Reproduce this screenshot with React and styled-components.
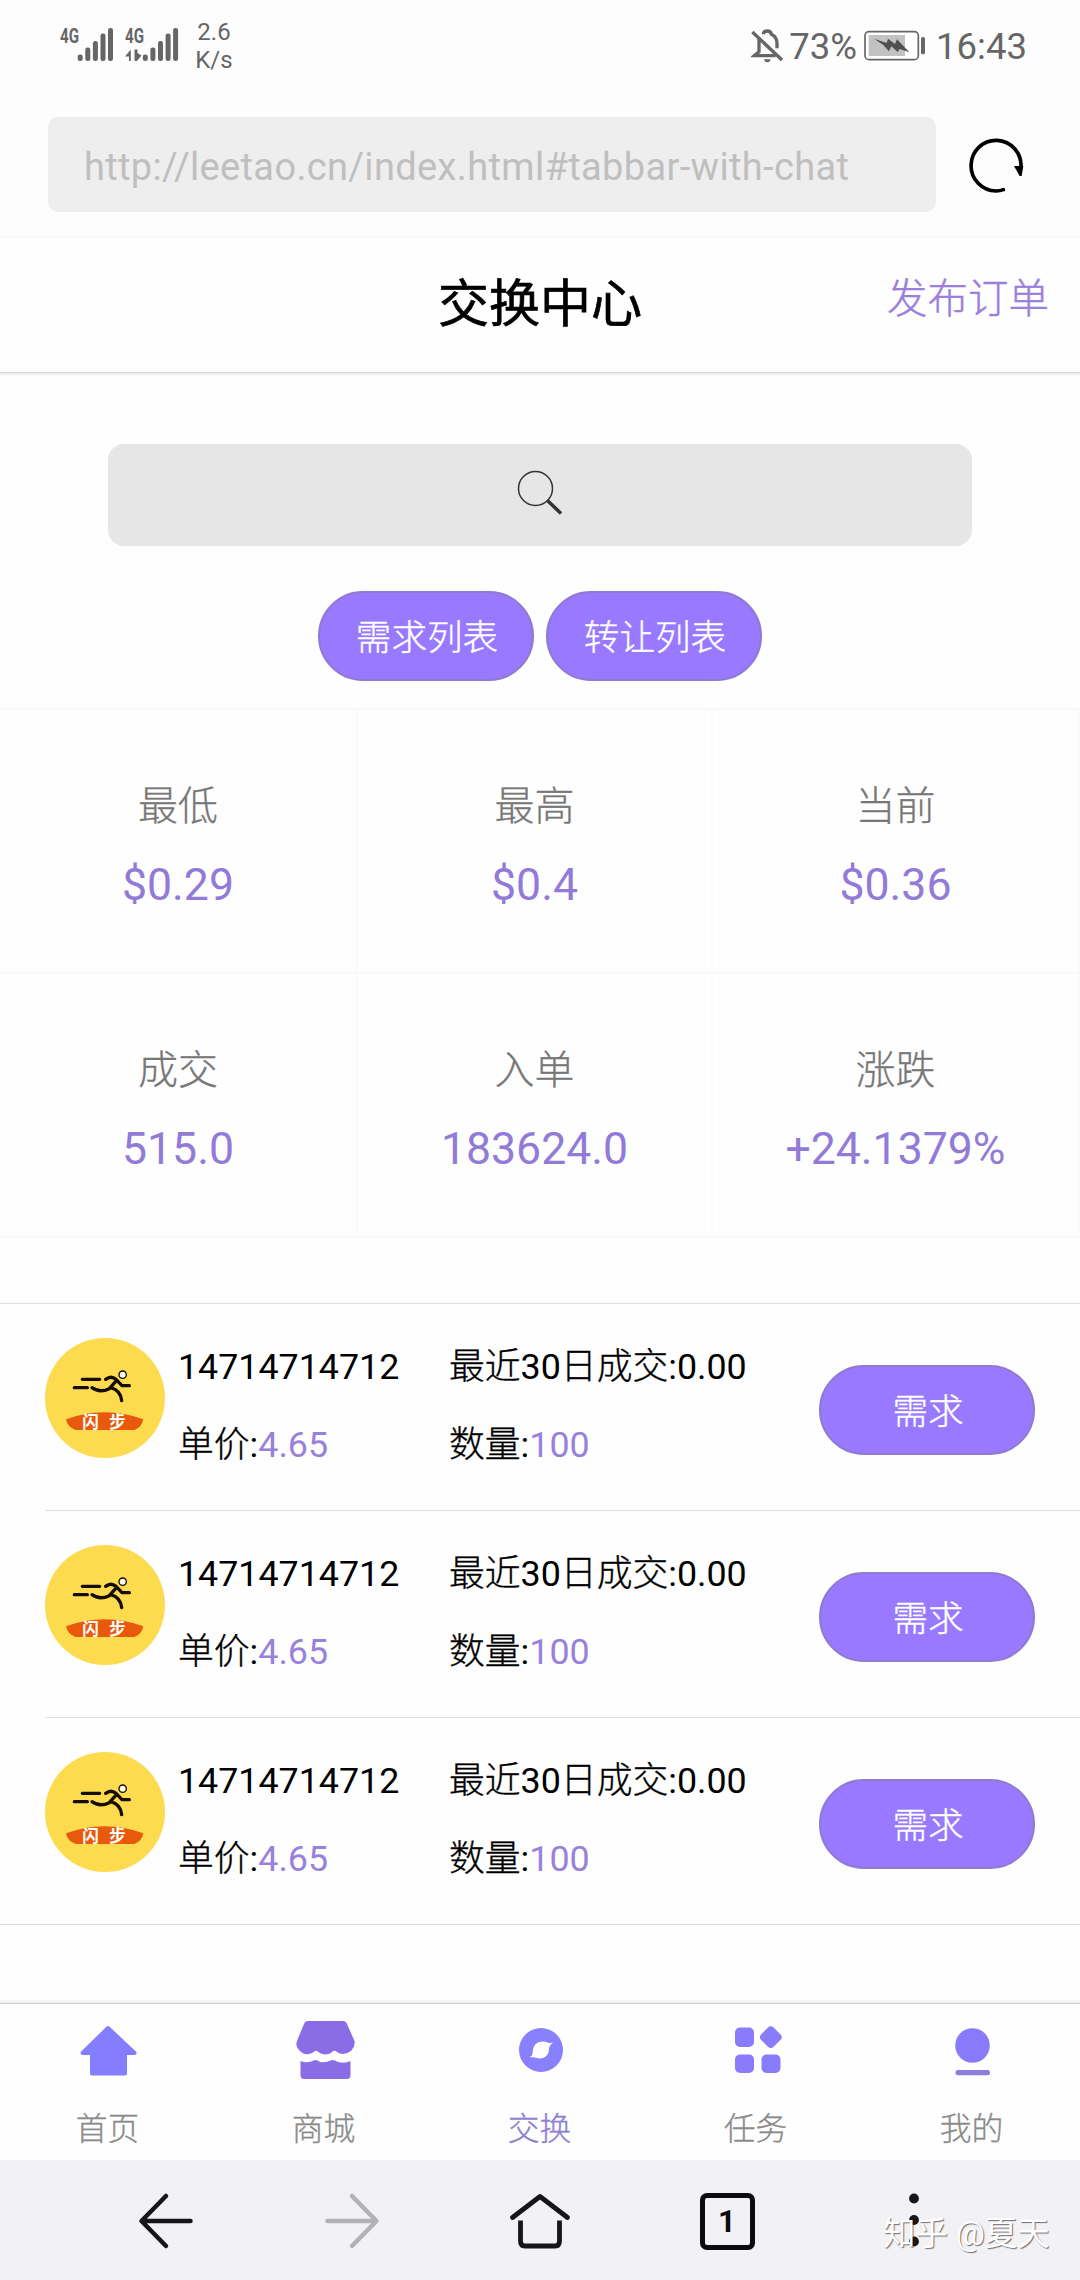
import React from "react";
import styled, { createGlobalStyle } from "styled-components";

const Global = createGlobalStyle`
  * { box-sizing: border-box; }
  body { margin: 0; background: #fefefe; }
`;

const Screen = styled.div`
  width: 1080px;
  height: 2280px;
  display: flex;
  flex-direction: column;
  overflow: hidden;
  background: #fefefe;
  font-family: Roboto, "Noto Sans CJK SC", sans-serif;
  font-weight: 400;
`;

const StatusBar = styled.div`
  height: 92px;
  flex: none;
  display: flex;
  justify-content: space-between;
  padding: 0 53px 0 56px;
  background: #fdfdfd;
  color: #666;
`;

const StatusGroup = styled.div`
  display: flex;
  align-items: flex-start;
`;

const NetSpeed = styled.div`
  width: 46px;
  margin: 18px 0 0 11px;
  font-size: 24px;
  line-height: 28px;
  text-align: center;
`;

const StatusText = styled.span`
  font-size: 36.5px;
  line-height: 44px;
  margin-top: 25px;
  margin-left: ${(p) => p.$left}px;
`;

const Icon = styled.svg`
  display: block;
  flex: none;
  width: ${(p) => p.$w}px;
  height: ${(p) => p.$h}px;
  margin-top: ${(p) => p.$top || 0}px;
  margin-left: ${(p) => p.$left || 0}px;
`;

const AddressRow = styled.div`
  height: 146px;
  flex: none;
  display: flex;
  align-items: flex-start;
  padding: 25px 0 0 48px;
  background: #fdfdfd;
`;

const AddressBox = styled.div`
  width: 888px;
  height: 95px;
  padding: 3px 0 0 36px;
  border-radius: 10px;
  background: #eee;
  color: #bfbfbf;
  font-size: 38px;
  letter-spacing: 0.35px;
  line-height: 95px;
  white-space: nowrap;
`;

const PageHeader = styled.header`
  height: 135px;
  flex: none;
  display: grid;
  grid-template-columns: 1fr auto 1fr;
  align-items: center;
  padding-right: 31px;
  border-bottom: 1px solid #d9d9d9;
  box-shadow: 0 1px 3px rgba(0, 0, 0, 0.12);
`;

const Title = styled.h1`
  grid-column: 2;
  margin: 0 0 0 31px;
  font-size: 51px;
  font-weight: 400;
  -webkit-text-stroke: 0.7px #000;
  line-height: 60px;
  color: #000;
`;

const HeaderAction = styled.span`
  justify-self: end;
  padding-bottom: 13px;
  font-size: 40.5px;
  font-weight: 300;
  -webkit-text-stroke: 0.4px #9a80dc;
  line-height: 50px;
  color: #9a80dc;
`;

const SearchBox = styled.div`
  width: 864px;
  height: 102px;
  flex: none;
  margin: 71px auto 0;
  display: flex;
  justify-content: center;
  border-radius: 16px;
  background: #e6e6e6;
`;

const FilterRow = styled.div`
  display: flex;
  flex: none;
  justify-content: center;
  gap: 12px;
  margin-top: 45px;
`;

const Pill = styled.button`
  width: 216px;
  height: 90px;
  flex: none;
  margin: 0;
  padding: 3px 0 0 2px;
  border: 2px solid #8f79d2;
  border-radius: 45px;
  background: #9879ff;
  color: #fff;
  font-family: inherit;
  font-size: 35.6px;
  font-weight: 300;
  -webkit-text-stroke: 0.4px #fff;
  line-height: 44px;
`;

const Stats = styled.div`
  display: grid;
  flex: none;
  grid-template-columns: 358px 355px 367px;
  grid-auto-rows: 264px;
  margin-top: 27px;
  border-top: 2px solid #fafafa;
`;

const Stat = styled.div`
  display: flex;
  flex-direction: column;
  align-items: center;
  gap: 30px;
  padding-top: 72.5px;
  border-right: 2px solid #fbfafc;
  border-bottom: 2px solid #fafafa;
`;

const StatLabel = styled.span`
  font-size: 40px;
  font-weight: 300;
  -webkit-text-stroke: 0.3px #777;
  line-height: 48px;
  color: #777;
`;

const StatValue = styled.span`
  font-size: 44.6px;
  line-height: 48px;
  color: #927bd8;
`;

const OrderList = styled.div`
  flex: none;
  margin-top: 65px;
  border-top: 1px solid #dedede;
  border-bottom: 1px solid #dadada;
`;

const Order = styled.div`
  height: 207px;
  display: flex;
  margin-left: 45px;
  border-bottom: 1px solid #dfdfdf;
  &:last-child {
    height: 206px;
    border-bottom: none;
  }
`;

const OrderColumn = styled.div`
  width: ${(p) => p.$w}px;
  margin-left: ${(p) => p.$left || 0}px;
  padding-top: 24px;
  font-size: 35.8px;
  line-height: 78px;
  color: #000;
  white-space: nowrap;
`;

const OrderLine = styled.div`
  height: 78px;
`;

const Han = styled.span`
  font-family: "Noto Sans CJK SC", sans-serif;
  font-weight: 300;
  -webkit-text-stroke: 0.35px #000;
  line-height: 0;
`;

const Amount = styled.span`
  color: #9781dc;
`;

const OrderAction = styled.div`
  padding-top: 61px;
`;

const BadgeText = styled.text`
  font-family: "Noto Sans CJK SC", sans-serif;
  font-size: 50px;
  font-weight: 700;
  fill: #fff;
`;

const SignalText = styled.text`
  font-family: Roboto, sans-serif;
  font-size: 20px;
  font-weight: 700;
  fill: #666;
`;

const TabBar = styled.nav`
  height: 157px;
  flex: none;
  margin-top: auto;
  display: grid;
  grid-template-columns: repeat(5, 1fr);
  border-top: 1px solid #cfcfcf;
  box-shadow: 0 -1px 3px rgba(0, 0, 0, 0.12);
`;

const Tab = styled.div`
  display: flex;
  flex-direction: column;
  align-items: center;
  padding-top: 12px;
  gap: 27px;
  font-size: 31.8px;
  font-weight: 300;
  -webkit-text-stroke: 0.3px currentColor;
  line-height: 40px;
  color: ${(p) => (p.$active ? "#8e80d0" : "#8a8a8a")};
`;

const TabLabel = styled.span`
  padding-right: 1px;
`;

const BrowserBar = styled.div`
  position: relative;
  height: 120px;
  flex: none;
  display: grid;
  grid-template-columns: repeat(5, 187px);
  justify-items: center;
  padding: 28px 73px 0 72px;
  background: #f2f1f5;
`;

const WindowCount = styled.div`
  width: 55px;
  height: 57px;
  margin: 5px 0 0 1px;
  display: flex;
  align-items: center;
  justify-content: center;
  border: 5px solid #0c0c0e;
  border-radius: 7px;
  font-size: 31px;
  font-weight: 700;
  color: #0c0c0e;
`;

const Watermark = styled.span`
  position: absolute;
  left: 883px;
  top: 54px;
  font-size: 32.4px;
  font-weight: 400;
  line-height: 40px;
  white-space: nowrap;
  color: #fff;
  text-shadow: 1px 1px 1px rgba(0, 0, 0, 0.55);
`;

const BARS = [
  [0, 54.6],
  [7.6, 47.5],
  [15.2, 41],
  [22.8, 33.6],
  [30.3, 28],
];

function Bars({ x }) {
  return BARS.map(([dx, top]) => (
    <rect key={dx} x={x + dx - 2.5} y={top} width="5" height={61 - top} rx="2.2" fill="#666" />
  ));
}

function Signals() {
  return (
    <Icon $w={124} $h={60} $top={15} viewBox="56 15 124 60">
      <SignalText x="60" y="42.6" textLength="19" lengthAdjust="spacingAndGlyphs">4G</SignalText>
      <Bars x={80.2} />
      <SignalText x="125" y="42.6" textLength="19" lengthAdjust="spacingAndGlyphs">4G</SignalText>
      <Bars x={145.3} />
      <path d="M130.8 61V49.500L125 56.500H129V61ZM134.500 49.500H137.500V53L141.500 55.500L137 61H134.500Z" fill="#666" />
    </Icon>
  );
}

function BellOff() {
  return (
    <Icon $w={34} $h={38} $top={27} viewBox="34 50 102 114">
      <g fill="none" stroke="#666" strokeWidth="10">
        <path d="M38 65L127 149" />
        <path d="M58 84V124L44 136H108" />
        <path d="M71 72Q71 62 83 62Q94 62 95 72Q112 80 112 100V114" />
      </g>
      <path d="M72 147H94Q90 156 83 156Q76 156 72 147Z" fill="#666" />
    </Icon>
  );
}

function Battery() {
  return (
    <Icon $w={62} $h={32} $top={30} $left={7} viewBox="375 60 186 96">
      <rect x="378" y="65" width="160" height="84" rx="12" fill="#fff" stroke="#666" strokeWidth="5" />
      <rect x="389" y="75" width="109" height="63" fill="#c2c2c2" />
      <path d="M405 86L443 99L447 86L468 102L474 88L511 127L482 117L476 126L457 109L450 124L432 104Z" fill="#505050" />
      <rect x="546" y="81" width="12" height="52" rx="5" fill="#666" />
    </Icon>
  );
}

function Reload() {
  return (
    <Icon $w={58} $h={58} $top={20} $left={31} viewBox="681 381 174 174">
      <path d="M843 472A75 76 0 1 0 768 543Q780 543 790 539" fill="none" stroke="#000" strokeWidth="11" strokeLinecap="round" />
      <path d="M822 468H850L845 498H839Z" fill="#000" />
    </Icon>
  );
}

function Magnifier() {
  return (
    <Icon $w={48} $h={48} $top={25} viewBox="516 469 48 48">
      <circle cx="535.5" cy="488.5" r="17" fill="none" stroke="#333" strokeWidth="1.5" />
      <path d="M547.5 500.5L561 513.5" stroke="#333" strokeWidth="3.5" />
    </Icon>
  );
}

function Avatar() {
  return (
    <Icon $w={120} $h={120} $top={34} viewBox="45 53 360 360">
      <circle cx="225" cy="233" r="180" fill="#fddb4f" />
      <g fill="none" stroke="#150c00" strokeWidth="10" strokeLinecap="round" strokeLinejoin="round">
        <path d="M157 177H209M133 202H172" />
        <path d="M227 177Q243 164 258 177L276 196H298" />
        <path d="M260 180L238 205Q209 219 186 202M242 202Q272 210 275 241" />
      </g>
      <circle cx="278" cy="163" r="11" fill="#fffdf0" stroke="#150c00" strokeWidth="4" />
      <path d="M108 297Q224 255 340 297Q335 322 313 329H137Q113 322 108 297Z" fill="#e8590c" />
      <BadgeText x="157" y="322">闪</BadgeText>
      <BadgeText x="237" y="322">步</BadgeText>
    </Icon>
  );
}

const TAB_ICONS = {
  home: (
    <path
      d="M108 2028L134.5 2053H125V2073.5H92V2053H82.5Z"
      fill="#857dff" stroke="#857dff" strokeWidth="4" strokeLinejoin="round"
    />
  ),
  shop: (
    <g fill="#8a6ce6">
      <path d="M308 2021H343Q346 2021 347 2024L354.5 2041Q355.500 2046 351 2051Q343 2056.500 337 2052Q334 2049 331 2053Q325 2056 319 2052.500Q316 2049 313 2052.500Q305 2057 299 2050Q295 2046 297 2041L304 2024Q305 2021 308 2021Z" />
      <path d="M300.500 2061Q307 2064 315 2060Q318 2060 320 2062Q326 2063 332 2060Q335 2060 338 2062Q345 2064 350.500 2061V2075Q350.500 2079 347 2079H304Q300.500 2079 300.500 2075Z" />
    </g>
  ),
  swap: (
    <g>
      <circle cx="541" cy="2050" r="22" fill="#8880ff" />
      <path d="M529.500 2057C533 2056 532 2054.500 533 2050C534 2043 540 2040.500 546 2042C549 2043.500 551 2043 553 2042.500C551 2045 549.500 2045 549 2049C549 2056 543 2060 537 2058C534 2056.500 532 2057.500 529.500 2057Z" fill="#fff" />
    </g>
  ),
  task: (
    <g fill="#897cfb">
      <rect x="735" y="2027.500" width="19" height="19.500" rx="5" />
      <rect x="735" y="2054.500" width="19" height="18.500" rx="5" />
      <rect x="761.500" y="2054.500" width="19" height="18.500" rx="5" />
      <rect x="762" y="2028.400" width="17.600" height="17.600" rx="4" transform="rotate(45 770.800 2037.200)" />
    </g>
  ),
  mine: (
    <g>
      <circle cx="972.500" cy="2045.500" r="17.300" fill="#887afb" />
      <rect x="955.500" y="2070" width="34.500" height="5.200" rx="2.500" fill="#8b7ddf" />
    </g>
  ),
};

const TABS = [
  { icon: "home", label: "首页" },
  { icon: "shop", label: "商城" },
  { icon: "swap", label: "交换", active: true },
  { icon: "task", label: "任务" },
  { icon: "mine", label: "我的" },
];

const STATS = [
  ["最低", "$0.29"],
  ["最高", "$0.4"],
  ["当前", "$0.36"],
  ["成交", "515.0"],
  ["入单", "183624.0"],
  ["涨跌", "+24.1379%"],
];

const ORDERS = [1, 2, 3].map((id) => ({
  id,
  phone: "14714714712",
  price: "4.65",
  volume: "0.00",
  amount: "100",
}));

export default function App() {
  return (
    <>
      <Global />
      <Screen>
        <StatusBar>
          <StatusGroup>
            <Signals />
            <NetSpeed>2.6 K/s</NetSpeed>
          </StatusGroup>
          <StatusGroup>
            <BellOff />
            <StatusText $left={4}>73%</StatusText>
            <Battery />
            <StatusText $left={10}>16:43</StatusText>
          </StatusGroup>
        </StatusBar>

        <AddressRow>
          <AddressBox>http://leetao.cn/index.html#tabbar-with-chat</AddressBox>
          <Reload />
        </AddressRow>

        <PageHeader>
          <Title>交换中心</Title>
          <HeaderAction>发布订单</HeaderAction>
        </PageHeader>

        <SearchBox>
          <Magnifier />
        </SearchBox>

        <FilterRow>
          <Pill>需求列表</Pill>
          <Pill>转让列表</Pill>
        </FilterRow>

        <Stats>
          {STATS.map(([label, value]) => (
            <Stat key={label}>
              <StatLabel>{label}</StatLabel>
              <StatValue>{value}</StatValue>
            </Stat>
          ))}
        </Stats>

        <OrderList>
          {ORDERS.map((o) => (
            <Order key={o.id}>
              <Avatar />
              <OrderColumn $w={271} $left={13}>
                <OrderLine>{o.phone}</OrderLine>
                <OrderLine><Han>单价</Han>:<Amount>{o.price}</Amount></OrderLine>
              </OrderColumn>
              <OrderColumn $w={370}>
                <OrderLine><Han>最近</Han>30<Han>日成交</Han>:{o.volume}</OrderLine>
                <OrderLine><Han>数量</Han>:<Amount>{o.amount}</Amount></OrderLine>
              </OrderColumn>
              <OrderAction>
                <Pill>需求</Pill>
              </OrderAction>
            </Order>
          ))}
        </OrderList>

        <TabBar>
          {TABS.map((t, i) => (
            <Tab key={t.icon} $active={t.active}>
              <Icon $w={66} $h={66} viewBox={`${75 + i * 216} 2016 66 66`}>{TAB_ICONS[t.icon]}</Icon>
              <TabLabel>{t.label}</TabLabel>
            </Tab>
          ))}
        </TabBar>

        <BrowserBar>
          <Icon $w={64} $h={66} viewBox="135 2188 64 66">
            <path d="M167 2196L142.500 2221L167 2246M143 2221H191.500" fill="none" stroke="#161618" strokeWidth="4.500" strokeLinecap="round" strokeLinejoin="round" />
          </Icon>
          <Icon $w={64} $h={66} viewBox="321 2188 64 66">
            <path d="M352 2196L376.500 2221L352 2246M376 2221H327.500" fill="none" stroke="#b3b2b5" strokeWidth="4.500" strokeLinecap="round" strokeLinejoin="round" />
          </Icon>
          <Icon $w={64} $h={66} viewBox="508 2188 64 66">
            <path d="M512.500 2217.500L540 2196.500L567.500 2217.500" fill="none" stroke="#161618" strokeWidth="4.800" strokeLinecap="round" strokeLinejoin="round" />
            <path d="M520.500 2220.500V2241Q520.500 2246 525 2246H555Q559.500 2246 559.500 2241V2220.500" fill="none" stroke="#161618" strokeWidth="4.800" />
          </Icon>
          <WindowCount>1</WindowCount>
          <Icon $w={64} $h={66} viewBox="882 2188 64 66">
            <circle cx="914" cy="2198.500" r="4.900" fill="#161618" />
            <circle cx="914" cy="2220" r="4.900" fill="#161618" />
            <circle cx="914" cy="2241.500" r="4.900" fill="#161618" />
          </Icon>
          <Watermark>知乎 @夏天</Watermark>
        </BrowserBar>
      </Screen>
    </>
  );
}
